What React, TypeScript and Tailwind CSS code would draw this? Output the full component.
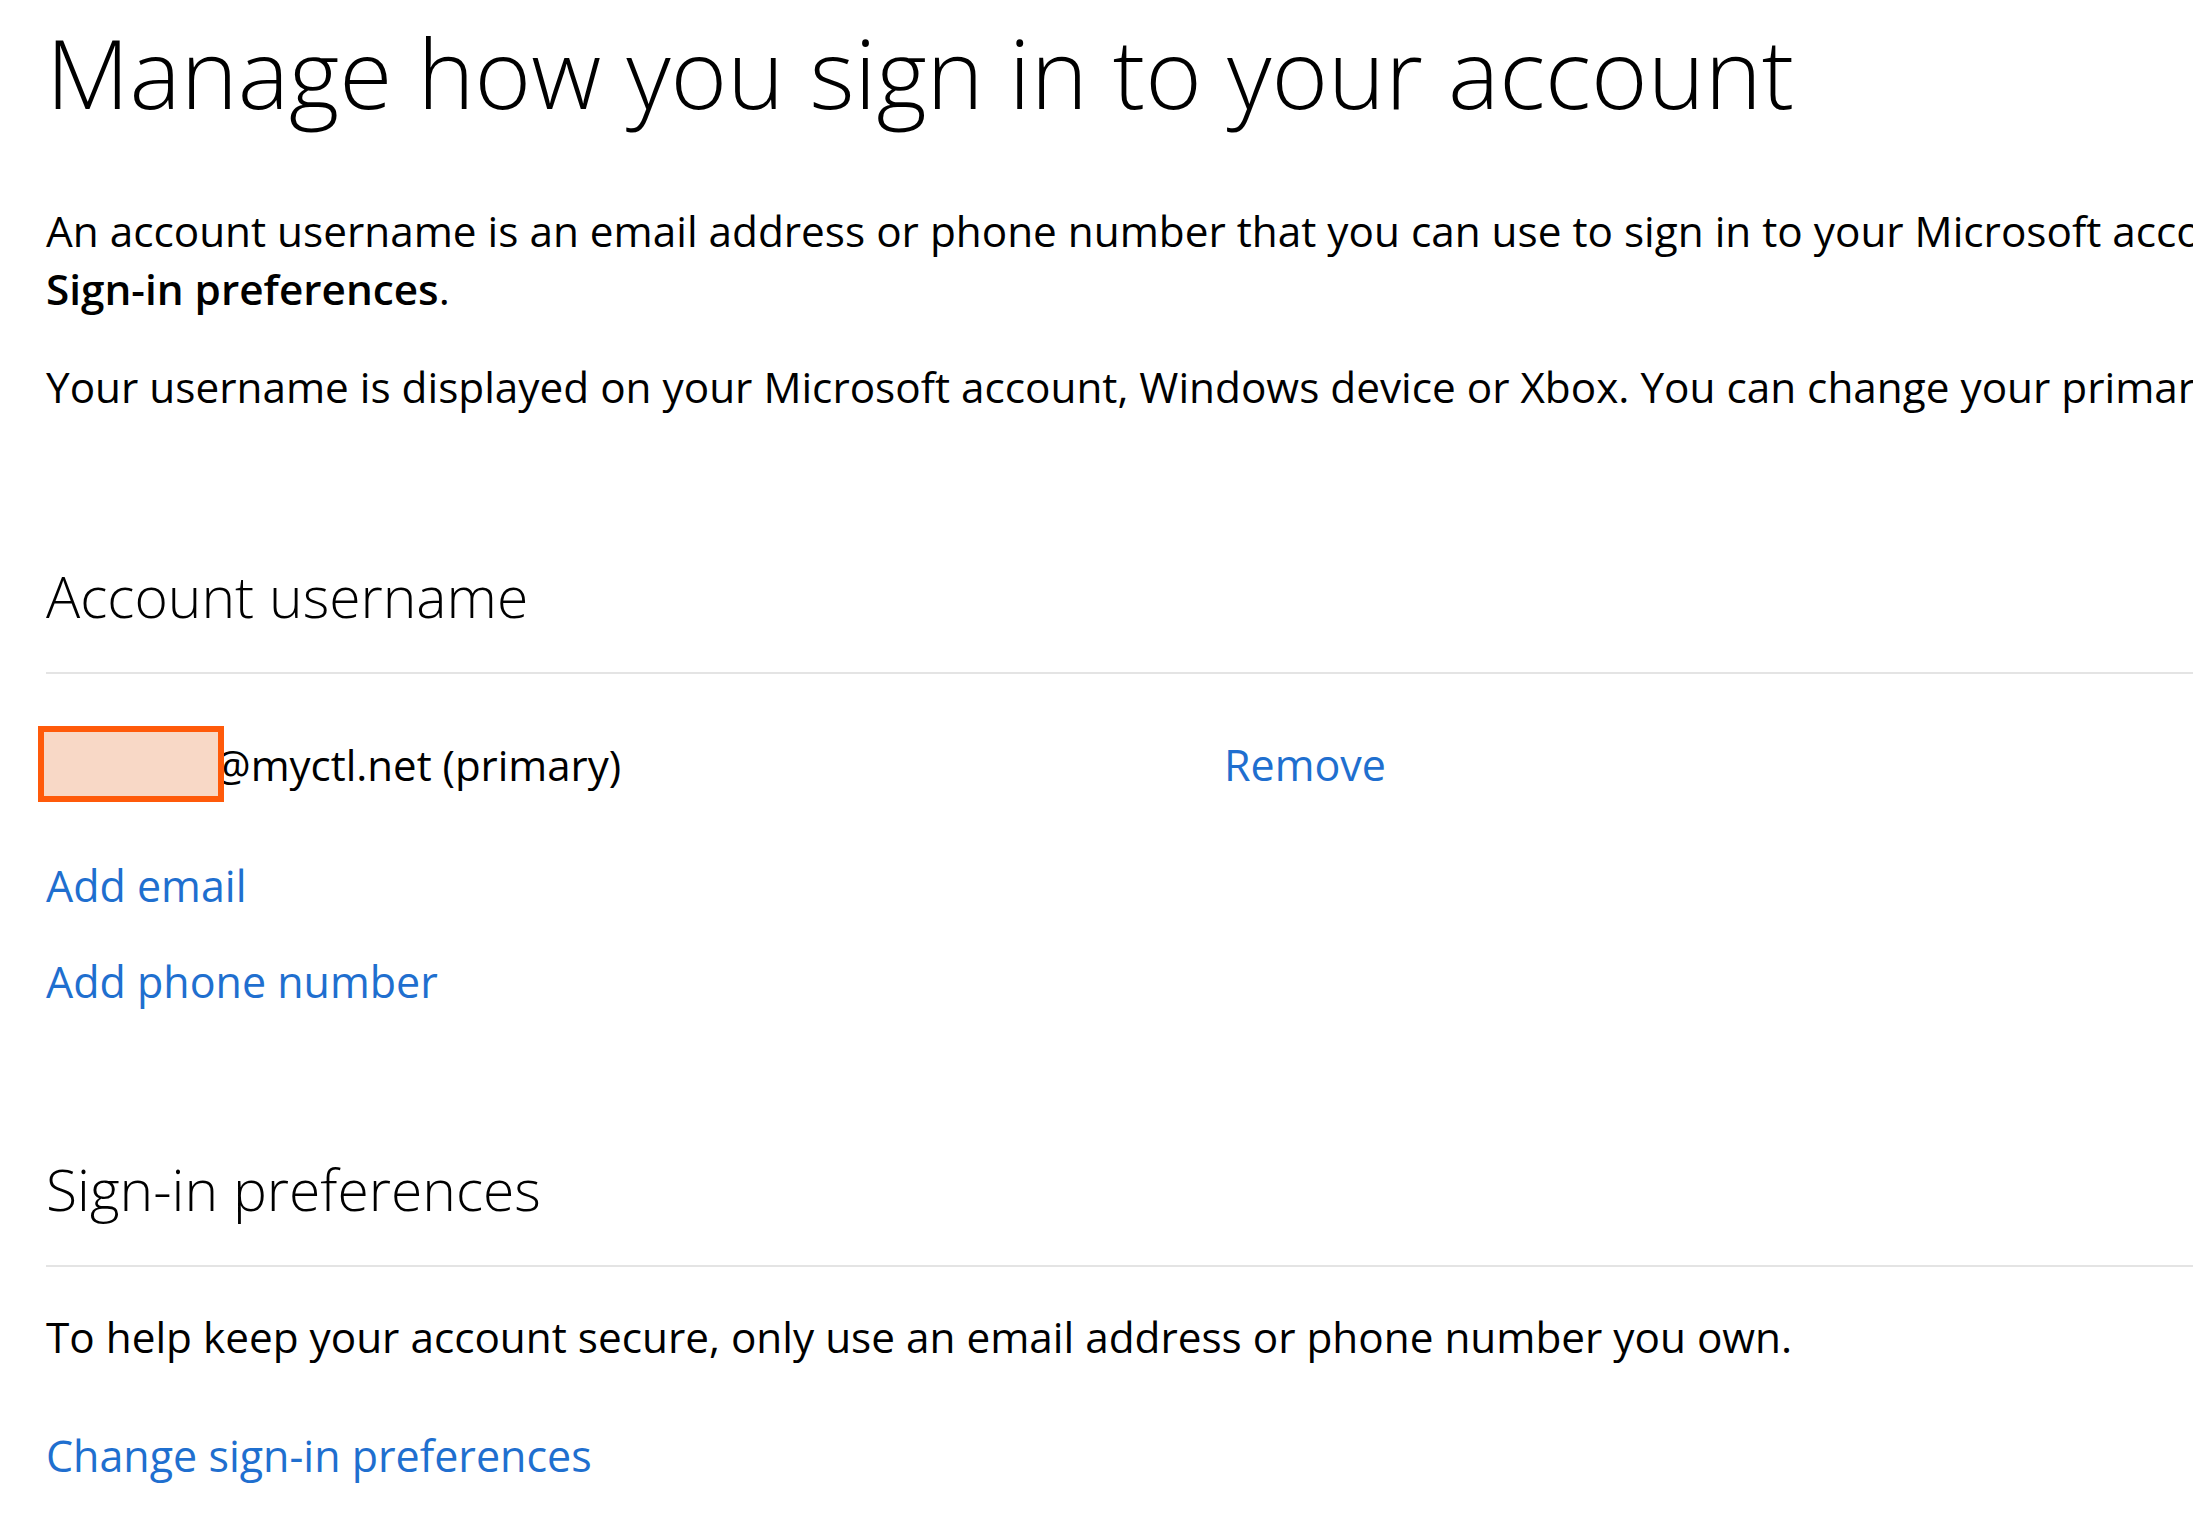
import React from "react";

const font = { fontFamily: '"Open Sans", "Noto Sans", Arial, sans-serif' };

function SectionHeading({ title, className }: { title: string; className: string }) {
  return (
    <div className={className}>
      <h2 className="text-[57px] leading-[72px] font-light text-black whitespace-nowrap">{title}</h2>
      <div className="mt-[40px] h-[2px] bg-[#e4e4e4]" />
    </div>
  );
}

function Link({ children, className = "" }: { children: React.ReactNode; className?: string }) {
  return (
    <a href="#" className={`block text-[43px] leading-[58px] text-[#1f6fcf] whitespace-nowrap ${className}`}>
      {children}
    </a>
  );
}

export default function App() {
  return (
    <div className="h-[1527px] w-full overflow-hidden bg-white" style={font}>
      <div className="pl-[46px] pt-[12px]">
        <h1 className="text-[96.7px] leading-[120px] font-light text-black whitespace-nowrap">
          Manage how you sign in to your account
        </h1>

        <p className="mt-[70px] text-[42.3px] leading-[58px] text-black whitespace-nowrap">
          An account username is an email address or phone number that you can use to sign in to your Microsoft account. To choose which ones can sign in, go to
          <br />
          <span className="font-semibold">Sign-in preferences</span>.
        </p>

        <p className="mt-[40px] text-[42.3px] leading-[58px] text-black whitespace-nowrap">
          Your username is displayed on your Microsoft account, Windows device or Xbox. You can change your primary username at any time.
        </p>

        <SectionHeading title="Account username" className="mt-[144px]" />

        <div className="mt-[62px] flex text-[42px] leading-[58px]">
          <div className="relative w-[1178px] flex text-black whitespace-nowrap">
            <span className="w-[167px]" />
            <span>@myctl.net (primary)</span>
            <span className="absolute left-[-8px] top-[-10px] h-[76px] w-[186px] border-[6px] border-[#ff5a0a] bg-[#f8d8c6]" />
          </div>
          <a href="#" className="text-[43px] text-[#1f6fcf]">Remove</a>
        </div>

        <Link className="mt-[63px]">Add email</Link>
        <Link className="mt-[38px]">Add phone number</Link>

        <SectionHeading title="Sign-in preferences" className="mt-[142px]" />

        <p className="mt-[41px] text-[42.3px] leading-[58px] text-black whitespace-nowrap">
          To help keep your account secure, only use an email address or phone number you own.
        </p>

        <Link className="mt-[61px]">Change sign-in preferences</Link>
      </div>
    </div>
  );
}
